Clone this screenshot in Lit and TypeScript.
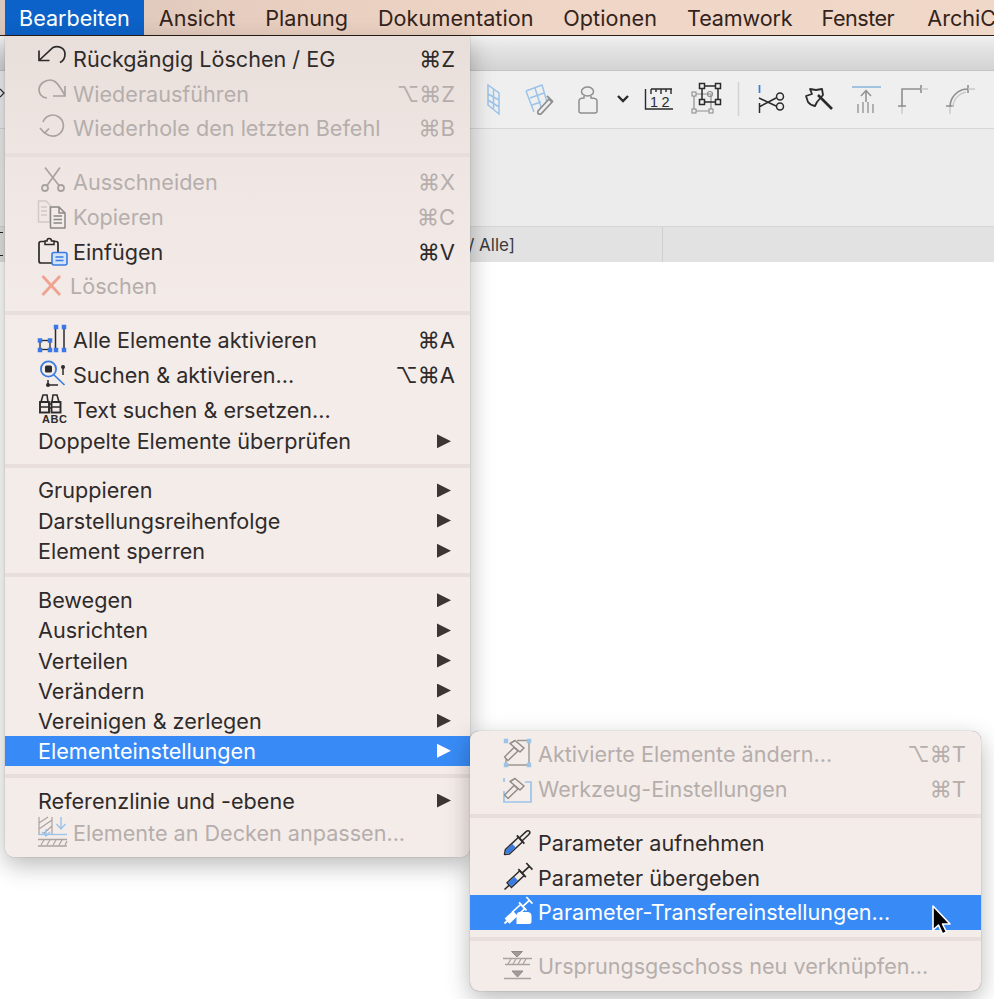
import { LitElement, html, css, svg, nothing } from "lit";
import { customElement } from "lit/decorators.js";

const G = "#a8a3a1";
const D = "#2c2a2a";
const B = "#3a7be0";
const L = "#9cc3ea";
const P = "#f3ebe8";

const handles = (pts: number[][], c: string, s = 4) =>
  pts.map(([x, y]) => svg`<rect x=${x - s / 2} y=${y - s / 2} width=${s} height=${s} fill=${c} stroke="none"/>`);

const hammer = (c: string) => svg`
  <path d="M11 8.5 L15 12 L5 21.5 L1.5 18 Z" fill=${P} stroke=${c} stroke-width="1.4" stroke-linejoin="round"/>
  <path d="M7 4.5 L12 1.5 L21 9 L17 13 Z" fill=${P} stroke=${c} stroke-width="1.5" stroke-linejoin="round"/>`;

const axis = "translate(1.5 26.5) rotate(-43)";

const icons: Record<string, unknown> = {
  undo: svg`<path d="M1 16.5 L15 3.5 C20 1 27 4 27 10 C27 14 25 17 22 18.5 M1 6.5 V16.5 H11.5" fill="none" stroke=${D} stroke-width="1.7"/>`,
  redo: svg`<path d="M9 19 C3 18.5 1 14 1 11 C1 5 7 1 12 1 C17 1 20 4 27 16.5 M27 7 V17 H15" fill="none" stroke=${G} stroke-width="1.7"/>`,
  repeat: svg`<path d="M5 9 A10.5 10.5 0 1 1 7 19.5 M2 15 L6.5 20 L11 15.5" fill="none" stroke=${G} stroke-width="1.7"/>`,
  cut: svg`<circle cx="7" cy="21" r="3" fill="none" stroke=${G} stroke-width="1.8"/><circle cx="23" cy="21" r="3" fill="none" stroke=${G} stroke-width="1.8"/><path d="M9 18.5 L22 0.5 M21 18.5 L7 0.5" stroke=${G} stroke-width="1.7"/>`,
  copy: svg`<path d="M0.5 -1 H8 L12 3 V20 H0.5 Z M3 5 H9 M3 9 H9 M3 13 H9" fill="none" stroke="#cfc9c7" stroke-width="1.4"/>
    <path d="M12.5 5 H21 L27 11 V26 H12.5 Z M21 5 V11 H27" fill=${P} stroke="#8b8886" stroke-width="1.5" stroke-linejoin="round"/><path d="M15.5 14 H24 M15.5 17.5 H24 M15.5 21 H24" stroke="#8b8886" stroke-width="1.4"/>`,
  paste: svg`<path d="M8 4.5 H3 Q1 4.5 1 6.5 V24 Q1 26 3 26 H16 M20 15 V6.5 Q20 4.5 18 4.5 H15" fill="none" stroke=${D} stroke-width="1.7"/>
    <path d="M7 7.5 V4 H9 Q9 1.5 11 1.5 Q13.5 1.5 13.5 4 H16 V7.5 Z" fill=${P} stroke=${D} stroke-width="1.5"/>
    <rect x="14" y="15.5" width="15" height="12.5" rx="2" fill="#d4e4f8" stroke=${B} stroke-width="1.6"/><path d="M17.5 20 H25.5 M17.5 23.5 H25.5" stroke=${B} stroke-width="1.5"/>`,
  del: svg`<path d="M4.5 5 L22 24 M22 5 L4.5 24" stroke="#f0a291" stroke-width="2.8"/>`,
  all: svg`<rect x="2" y="15.5" width="10" height="9" fill="none" stroke=${D} stroke-width="1.3"/><path d="M17.5 24 V2 M26 24 V2" stroke=${D} stroke-width="1.5"/>
    ${handles([[2, 15.5], [12, 15.5], [2, 25], [12, 25], [18, 2], [26, 2], [18, 25], [26, 25]], "#3a78e8", 4.5)}`,
  find: svg`<circle cx="10.5" cy="9" r="7.6" fill="none" stroke=${B} stroke-width="1.8"/><rect x="7" y="5.5" width="7" height="7" rx="1.5" fill="#2e2b2c"/><path d="M16 15 L26.5 25" stroke=${B} stroke-width="1.7"/>
    <circle cx="25" cy="7" r="2" fill=${D}/><path d="M25 8 V15 M10 20 V25 H20" stroke=${D} stroke-width="1.5" fill="none"/><circle cx="10" cy="25" r="2" fill=${D}/>`,
  bino: svg`<path d="M3 7 L5 0 H9 L10 7 Z M14 7 L15 0 H19 L21 7 Z" fill="none" stroke=${D} stroke-width="1.6"/><rect x="2" y="7" width="9" height="10.5" fill="none" stroke=${D} stroke-width="1.9"/><rect x="13.5" y="7" width="9" height="10.5" fill="none" stroke=${D} stroke-width="1.9"/><path d="M11 9 H13.5 M11 13 H13.5 M2 12 H11 M13.5 12 H22.5" stroke=${D} stroke-width="1.5"/>
    <text x="4" y="28" font-family="Liberation Sans" font-weight="700" font-size="11" letter-spacing="0.6" fill=${D} stroke="none">ABC</text>`,
  deck: svg`<path d="M1 -1 V16 M14 -1 V16 M1 5 L10 -1 M1 11 L14 2 M5 16 L14 8" fill="none" stroke=${G} stroke-width="1.2"/>
    <path d="M23 -1 V10 M18.5 6 L23 11 L27.5 6 M8 11 V16 M4 14 L8 18 L12 14" fill="none" stroke=${L} stroke-width="1.5"/>
    <path d="M0 16.5 H29" stroke=${L} stroke-width="1.3"/><path d="M0 21.5 H29 M0 28 H29" stroke=${G} stroke-width="1.3"/>
    <path d="M3 27 L6 22 M9 27 L12 22 M15 27 L18 22 M21 27 L24 22 M27 27 L29 23" stroke=${G} stroke-width="1.2"/>`,
  activ: svg`<path d="M14 1.5 H26 V26 H3 V20" fill="none" stroke="#9b9694" stroke-width="1.4"/>${handles([[3, 2], [26, 2], [3, 26], [26, 26]], L, 4.5)}${hammer("#8f8b89")}`,
  tool: svg`<g transform="translate(0 3)"><path d="M1 1 V5 M1 14 V25 H28 V5 H22" fill="none" stroke=${L} stroke-width="1.7"/>${hammer("#8f8b89")}</g>`,
  pick: svg`<g transform=${axis} fill="none" stroke=${D}>
    <path d="M0 0 L4 -3 H22 V3 H4 Z" fill=${P} stroke-width="1.5" stroke-linejoin="round"/>
    <path d="M1 0 L4.5 -2.4 H13 V2.4 H4.5 Z" fill=${B} stroke="none"/>
    <path d="M22 -5.5 V5.5" stroke-width="1.8"/>
    <path d="M22 -2 H31 Q34 -2 34 0 Q34 2 31 2 H22" stroke-width="1.5"/></g>`,
  inject: svg`<g transform=${axis} fill="none" stroke=${D}>
    <path d="M0 0 H7" stroke-width="1.6"/>
    <path d="M6.5 -3.2 H24 V3.2 H6.5 Z" fill=${P} stroke-width="1.5"/>
    <path d="M7 -2.6 H16 V2.6 H7 Z" fill=${B} stroke="none"/>
    <path d="M24 -5.5 V5.5 M24 0 H34 M34 -4.5 V4.5" stroke-width="1.7"/></g>`,
  transfer: svg`<g transform=${axis} fill="none" stroke="#fff">
    <path d="M0 0 H4" stroke-width="1.8"/>
    <path d="M3.5 -3.5 H14 V3.5 H3.5 Z" fill="#fff" stroke="none"/>
    <path d="M14 -3 H25 V3 H14 Z" stroke-width="1.6"/>
    <path d="M25 -5.5 V5.5 M25 0 H34 M34 -4.5 V4.5" stroke-width="1.7"/></g>
    <path d="M13.5 27 V19 Q13.5 15 17 15 H24 Q28.5 15 28.5 19 V25 Q28.5 27 26 27 Z" fill="#fff"/>`,
  origin: svg`<path d="M8.5 0.5 H19.5 L14 6 Z M9 20 H20 L14.5 26 Z" fill="#a09b99" stroke="#8f8b89" stroke-width="1"/><path d="M0 7.5 H29 M2 13.5 H27 M1 27.5 H28" stroke=${G} stroke-width="1.5"/><path d="M5 13 L8 8 M10 13 L13 8 M15 13 L18 8 M20 13 L23 8" stroke=${G} stroke-width="1.3"/>`,
};

type Row = { t?: string; icon?: string; k?: string; off?: boolean; sub?: boolean; hl?: boolean; h?: string; narrow?: boolean };
type Sep = { sep: true };
type Item = Row | Sep;
const S: Sep = { sep: true };

const mainMenu: Item[] = [
  { t: "Rückgängig Löschen / EG", icon: "undo", k: "⌘Z" },
  { t: "Wiederausführen", icon: "redo", k: "⌥⌘Z", off: true },
  { t: "Wiederhole den letzten Befehl", icon: "repeat", k: "⌘B", off: true },
  S,
  { t: "Ausschneiden", icon: "cut", k: "⌘X", off: true },
  { t: "Kopieren", icon: "copy", k: "⌘C", off: true },
  { t: "Einfügen", icon: "paste", k: "⌘V" },
  { t: "Löschen", icon: "del", off: true, narrow: true },
  S,
  { t: "Alle Elemente aktivieren", icon: "all", k: "⌘A" },
  { t: "Suchen & aktivieren...", icon: "find", k: "⌥⌘A" },
  { t: "Text suchen & ersetzen...", icon: "bino" },
  { t: "Doppelte Elemente überprüfen", sub: true, h: "short" },
  S,
  { t: "Gruppieren", sub: true },
  { t: "Darstellungsreihenfolge", sub: true },
  { t: "Element sperren", sub: true },
  S,
  { t: "Bewegen", sub: true },
  { t: "Ausrichten", sub: true },
  { t: "Verteilen", sub: true },
  { t: "Verändern", sub: true },
  { t: "Vereinigen & zerlegen", sub: true },
  { t: "Elementeinstellungen", sub: true, hl: true },
  S,
  { t: "Referenzlinie und -ebene", sub: true, h: "ref" },
  { t: "Elemente an Decken anpassen...", icon: "deck", off: true },
];

const subMenu: Item[] = [
  { t: "Aktivierte Elemente ändern...", icon: "activ", k: "⌥⌘T", off: true },
  { t: "Werkzeug-Einstellungen", icon: "tool", k: "⌘T", off: true },
  S,
  { t: "Parameter aufnehmen", icon: "pick" },
  { t: "Parameter übergeben", icon: "inject" },
  { t: "Parameter-Transfereinstellungen...", icon: "transfer", hl: true },
  S,
  { t: "Ursprungsgeschoss neu verknüpfen...", icon: "origin", off: true },
];

const barItems = ["Ansicht", "Planung", "Dokumentation", "Optionen", "Teamwork", "Fenster", "ArchiC"];

@customElement("app-root")
export class AppRoot extends LitElement {
  static styles = css`
    :host {
      display: block;
      position: relative;
      width: 994px;
      height: 999px;
      overflow: hidden;
      background: #fff;
      font-family: Inter, "Liberation Sans", "DejaVu Sans", sans-serif;
      color: #2f2b2a;
    }
    .bar {
      display: flex;
      height: 35px;
      padding-left: 5px;
      border-bottom: 1px solid #2a1d16;
      background: linear-gradient(90deg, #d9c6bc 0, #e9cfc0 30%, #efd6c6 60%, #f0d8c9 100%);
      font-size: 21.6px;
      color: #33231b;
      overflow: hidden;
      white-space: nowrap;
    }
    .bar span { display: flex; align-items: center; margin-right: 30px; }
    .bar .active { background: #0c62c8; color: #fff; padding: 0 14px; margin-right: 15px; }
    .bar span:nth-child(4) { letter-spacing: 0.08px; margin-right: 29.5px; }
    .bar span:nth-child(5) { letter-spacing: 0.1px; }
    .bar span:nth-child(6) { letter-spacing: -0.15px; margin-right: 29px; }
    .bar span:nth-child(7) { letter-spacing: -0.5px; margin-right: 33px; }
    .title { height: 34px; border-bottom: 1px solid #c4c4c4; background: linear-gradient(#f1f1f1 0, #e2e2e2 40%, #d3d3d3 100%); }
    .tools { height: 57px; border-bottom: 1px solid #d6d6d6; background: #efefef; }
    .tools svg { display: block; }
    .blank { height: 97px; background: #ececec; border-bottom: 1px solid #d6d6d6; }
    .tabs { display: flex; height: 35px; background: #e2e2e2; font-size: 17px; color: #3a3a3a; position: relative; }
    .tab { width: 663px; box-sizing: border-box; border-right: 1px solid #cfcfcf; padding-right: 147px; text-align: right; line-height: 36px; }
    .frag { position: absolute; left: 0; top: 5px; width: 3px; height: 22px; border-top: 1px solid #222; border-bottom: 1px solid #222; }

    .menu {
      position: absolute;
      box-sizing: border-box;
      padding: 5.7px 0 6px;
      background: linear-gradient(#e8dfdb 0, #efe6e3 120px, #f4ece9 300px);
      box-shadow: 0 0 1px rgba(0, 0, 0, .5), 0 8px 24px rgba(0, 0, 0, .28);
      font-size: 21.6px;
    }
    .main { left: 5px; top: 36px; width: 465px; height: 821px; border-radius: 0 0 9px 9px; }
    .sub { left: 470px; top: 731px; width: 511px; height: 260px; border-radius: 9px; background: #f4ece9; padding-top: 6px; }
    .row {
      display: flex;
      align-items: center;
      height: 30.1px;
      padding: 0 15px 0 33px;
      white-space: nowrap;
    }
    .row.has-icon { height: 34.6px; }
    .row.short { height: 29px; }
    .row.ref { height: 30.2px; }
    .row.off { color: #b5aeac; }
    .row.hl { background: #388bf6; color: #fff; }
    .ico { flex: none; width: 35px; height: 30px; }
    .ico.narrow { width: 32px; }
    .ico svg { display: block; overflow: visible; }
    .label { flex: 1; }
    .key { font-family: Inter, "DejaVu Sans", sans-serif; font-size: 22px; color: #2f2b2a; }
    .off .key { color: #b5aeac; }
    .arrow { width: 14px; height: 14px; margin-right: 4px; background: #3d3534; clip-path: polygon(0 0, 100% 50%, 0 100%); }
    .hl .arrow { background: #fff; }
    .sep { height: 19.6px; display: flex; align-items: center; }
    .sep i { display: block; width: 100%; height: 4px; background: #e8dfdc; }
    .cursor { position: absolute; left: 930px; top: 904px; }
  `;

  private renderItems(items: Item[]) {
    return items.map((it) => {
      if ("sep" in it) return html`<div class="sep"><i></i></div>`;
      const cls = ["row", it.icon ? "has-icon" : "", it.off ? "off" : "", it.hl ? "hl" : "", it.h ?? ""].join(" ");
      return html`<div class=${cls}>
        ${it.icon
          ? html`<span class="ico ${it.narrow ? "narrow" : ""}"><svg width="30" height="30" viewBox="0 0 30 30">${icons[it.icon]}</svg></span>`
          : nothing}
        <span class="label">${it.t}</span>
        ${it.k ? html`<span class="key">${it.k}</span>` : nothing}
        ${it.sub ? html`<span class="arrow"></span>` : nothing}
      </div>`;
    });
  }

  private toolbar() {
    const g = "#8f8f8f";
    const d = "#2b2b2b";
    const b = "#9cc3e8";
    return html`<svg width="994" height="57" viewBox="0 72 994 57" fill="none">
      <path d="M488 86 L499 94 V115 L488 106 Z M488 95 L499 101 M488 101 L499 108 M493.5 90 V111" stroke=${b} stroke-width="1.5"/>
      <path d="M526 92 L542 86 L547 103 M534 113 L526 92 M530 99 L544 94 M532 106 L541 103 M535 89 L541 108" stroke=${b} stroke-width="1.5"/>
      <path d="M538 112 L549 100 L552 103 L541 115 Q537 116 538 112 Z M547 97 L553 103" stroke=${g} stroke-width="1.8"/>
      <ellipse cx="587.5" cy="92.5" rx="6" ry="4.5" stroke=${g} stroke-width="1.5"/>
      <path d="M584 97 V99 Q579 99 579 102 V112 Q579 114 581 114 H595 Q597 114 597 112 V102 Q597 99 591 99 V97" stroke=${g} stroke-width="1.5"/>
      <path d="M618 97 L623 102 L628 97" stroke=${d} stroke-width="2.4"/>
      <path d="M651 90 H672 M645.5 90 V110 H673 M651 90 V95 M656 90 V93 M661 90 V95 M666 90 V93 M671 90 V95" stroke=${d} stroke-width="1.4"/>
      <text x="650" y="107.5" font-family="Liberation Sans" font-size="14.5" letter-spacing="3.5" fill=${d}>12</text>
      <path d="M694 95 H711 V112 H694 Z" stroke=${g} stroke-width="1.2"/>
      <circle cx="710" cy="95" r="2.5" stroke=${g} stroke-width="1.2"/>
      <path d="M702 87 H718 V103 H702 Z" stroke=${d} stroke-width="1.5"/>
      ${[[702, 87], [718, 87], [702, 103], [718, 103]].map(([x, y]) => svg`<rect x=${x - 2.5} y=${y - 2.5} width="5" height="5" fill="#efefef" stroke=${d} stroke-width="1.5"/>`)}
      ${[[694, 95], [694, 112], [711, 112]].map(([x, y]) => svg`<rect x=${x - 2} y=${y - 2} width="4" height="4" fill="#efefef" stroke=${g} stroke-width="1.1"/>`)}
      <path d="M738.5 83 V117" stroke="#d2d2d2" stroke-width="1.5"/>
      <path d="M759.5 86 V94" stroke="#3a7be0" stroke-width="1.7"/>
      <path d="M759.5 104 V114 M759 99 L776 107 M759 108 L776 99" stroke=${d} stroke-width="1.5"/>
      <circle cx="780" cy="97.5" r="3.5" stroke=${d} stroke-width="1.5"/><circle cx="780" cy="107.5" r="3.5" stroke=${d} stroke-width="1.5"/>
      <path d="M806 97 L812 95 L810 90 L816 91 L822 90 L823 96 L817 103 L815 107 Q810 106 808 103 Z" stroke=${d} stroke-width="1.8" stroke-linejoin="round"/>
      <path d="M818 96 L832 110" stroke=${d} stroke-width="2.6"/>
      <path d="M852 88 H881" stroke="#8fb8dc" stroke-width="1.6"/>
      <path d="M866 91 V103 M861 97 L866 91.5 L871 97" stroke=${g} stroke-width="1.5"/>
      <path d="M858 105 V114 M863 103 V114 M868 103 V114 M873 105 V114" stroke=${g} stroke-width="1.3"/>
      <path d="M902 108 V90 H921 M921 86 V94 M898 107 H906" stroke=${g} stroke-width="1.6"/>
      <path d="M921 90 H928 M902 108 V115" stroke="#c9c9c9" stroke-width="1.4"/>
      <path d="M950 108 C950 98 958 90 968 90 M968 86 V94 M946 107 H954" stroke=${g} stroke-width="1.6"/>
      <path d="M968 90 H975 M950 108 V115 M953 108 C953 100 960 94 966 93" stroke="#c9c9c9" stroke-width="1.4"/>
      <path d="M0 90 L4 94 L0 98" stroke=${d} stroke-width="1.2"/>
    </svg>`;
  }

  render() {
    return html`
      <div class="bar">
        <span class="active">Bearbeiten</span>
        ${barItems.map((t) => html`<span>${t}</span>`)}
      </div>
      <div class="title"></div>
      <div class="tools">${this.toolbar()}</div>
      <div class="blank"></div>
      <div class="tabs"><div class="frag"></div><div class="tab">/ Alle]</div></div>

      <div class="menu main">${this.renderItems(mainMenu)}</div>
      <div class="menu sub">${this.renderItems(subMenu)}</div>

      <svg class="cursor" width="24" height="34" viewBox="0 0 24 34">
        <path d="M3 2 V26 L8.5 21 L12.5 30 L16.5 28 L12.5 20 H20 Z" fill="#000" stroke="#fff" stroke-width="1.6" stroke-linejoin="round"/>
      </svg>
    `;
  }
}
